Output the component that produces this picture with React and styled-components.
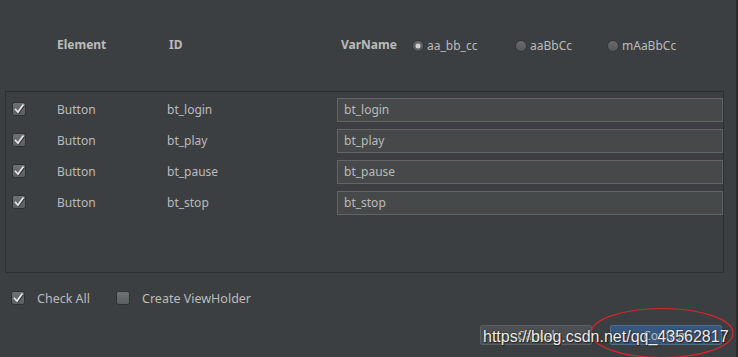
import styled, { createGlobalStyle } from "styled-components";

const GlobalStyle = createGlobalStyle`
  html, body {
    margin: 0;
    padding: 0;
    background: #3c3f41;
  }
  * {
    box-sizing: border-box;
  }
`;

const rows = [
  { element: "Button", id: "bt_login" },
  { element: "Button", id: "bt_play" },
  { element: "Button", id: "bt_pause" },
  { element: "Button", id: "bt_stop" },
];

const radios = [
  { label: "aa_bb_cc", checked: true, width: 103 },
  { label: "aaBbCc", checked: false, width: 92 },
  { label: "mAaBbCc", checked: false, width: 92 },
];

function CheckBox({ checked }) {
  return (
    <svg width="14" height="14" viewBox="0 0 14 14">
      <defs>
        <linearGradient id="cbg" x1="0" y1="0" x2="0" y2="1">
          <stop offset="0" stopColor="#6f7274" />
          <stop offset="1" stopColor="#5b5e60" />
        </linearGradient>
      </defs>
      <rect x="0.5" y="0.5" width="13" height="13" rx="2" fill="url(#cbg)" stroke="#2e3032" />
      {checked && (
        <>
          <path d="M3 6.8 L6 10 L11.5 2.5" fill="none" stroke="#2a2a2a" strokeWidth="2" transform="translate(0.6 0.8)" />
          <path d="M3 6.8 L6 10 L11.5 2.5" fill="none" stroke="#e6e6e6" strokeWidth="1.8" />
        </>
      )}
    </svg>
  );
}

function Radio({ checked }) {
  return (
    <svg width="12" height="12" viewBox="0 0 12 12">
      <defs>
        <linearGradient id="rbg" x1="0" y1="0" x2="0" y2="1">
          <stop offset="0" stopColor="#6a6d70" />
          <stop offset="1" stopColor="#55585a" />
        </linearGradient>
      </defs>
      <circle cx="6" cy="6" r="5.5" fill="url(#rbg)" stroke="#333537" />
      {checked && <circle cx="6" cy="6" r="2.5" fill="#d0d0d0" />}
    </svg>
  );
}

function App() {
  return (
    <>
      <GlobalStyle />
      <Window>
        <Header>
          <HeadCell w={112}>Element</HeadCell>
          <HeadCell w={172}>ID</HeadCell>
          <HeadCell w={71}>VarName</HeadCell>
          {radios.map((r) => (
            <RadioItem key={r.label} w={r.width}>
              <Radio checked={r.checked} />
              <span>{r.label}</span>
            </RadioItem>
          ))}
        </Header>
        <Panel>
          {rows.map((r) => (
            <Row key={r.id}>
              <CheckCell>
                <CheckBox checked />
              </CheckCell>
              <Cell>{r.element}</Cell>
              <Cell>{r.id}</Cell>
              <Field defaultValue={r.id} />
            </Row>
          ))}
        </Panel>
        <Options>
          <Option>
            <CheckBox checked />
            <span>Check All</span>
          </Option>
          <Option>
            <CheckBox checked={false} />
            <span>Create ViewHolder</span>
          </Option>
        </Options>
        <Buttons>
          <Button>Cancel</Button>
          <Button primary>Confirm</Button>
          <Ellipse width="146" height="52" viewBox="0 0 146 52">
            <ellipse cx="73" cy="26" rx="71" ry="24.5" fill="none" stroke="#d8262b" strokeWidth="1.2" />
          </Ellipse>
          <Watermark>https://blog.csdn.net/qq_43562817</Watermark>
        </Buttons>
      </Window>
    </>
  );
}

export default App;

const Window = styled.div`
  width: 738px;
  height: 357px;
  background: #3c3f41;
  border-right: 2px solid #2b2b2b;
  font-family: "Noto Sans", "Open Sans", sans-serif;
  font-size: 12px;
  color: #bbbbbb;
  overflow: hidden;
  display: flex;
  flex-direction: column;
`;

const Header = styled.div`
  height: 88px;
  display: flex;
  align-items: center;
  padding-left: 57px;
`;

const HeadCell = styled.div`
  width: ${(p) => p.w}px;
  font-weight: bold;
  color: #bbbbbb;
`;

const RadioItem = styled.label`
  width: ${(p) => p.w}px;
  display: flex;
  align-items: center;
  gap: 3px;
  margin-top: 3px;
  svg {
    flex: none;
  }
`;

const Panel = styled.div`
  margin: 3px 12px 0 5px;
  height: 182px;
  border: 1px solid #2d2f31;
  padding: 6px 1px 0 6px;
  display: flex;
  flex-direction: column;
  gap: 7px;
`;

const Row = styled.div`
  display: grid;
  grid-template-columns: 45px 110px 170px 1fr;
  align-items: center;
  height: 24px;
`;

const CheckCell = styled.div`
  display: flex;
  align-items: center;
  margin-top: -2px;
`;

const Cell = styled.div`
  color: #bbbbbb;
  margin-top: -2px;
`;

const Field = styled.input`
  height: 24px;
  width: 386px;
  background: #45494a;
  border: 1px solid #646464;
  color: #bbbbbb;
  font: inherit;
  padding: 0 6px 2px;
  outline: none;
`;

const Options = styled.div`
  height: 50px;
  display: flex;
  align-items: center;
  padding-left: 11px;
  gap: 26px;
  font-size: 12.5px;
`;

const Option = styled.label`
  display: flex;
  align-items: center;
  gap: 12px;
  svg {
    flex: none;
  }
`;

const Buttons = styled.div`
  position: relative;
  display: flex;
  justify-content: flex-end;
  gap: 18px;
  padding: 2px 14px 0 0;
`;

const Button = styled.button`
  width: 112px;
  height: 20px;
  border-radius: 2px;
  border: 1px solid ${(p) => (p.primary ? "#4c708c" : "#5e6060")};
  background: ${(p) => (p.primary ? "#365880" : "#4c5052")};
  color: #bbbbbb;
  font: inherit;
  font-size: 12px;
  padding: 0;
`;

const Ellipse = styled.svg`
  position: absolute;
  left: 589px;
  top: -16px;
  pointer-events: none;
`;

const Watermark = styled.div`
  position: absolute;
  left: 483px;
  top: 5px;
  font-family: "Liberation Sans", Arial, sans-serif;
  font-size: 16px;
  color: #ececec;
  text-shadow: 0 0 2px #222, 1px 1px 1px #222;
  white-space: nowrap;
  pointer-events: none;
`;
